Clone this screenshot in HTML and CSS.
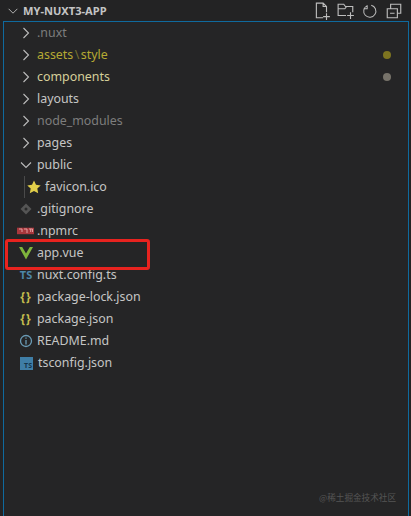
FILE: index.html
```html
<!DOCTYPE html>
<html lang="en">
<head>
<meta charset="utf-8">
<title>Explorer</title>
<link rel="stylesheet" href="styles.css">
</head>
<body>
<div class="panel">
  <header class="head">
    <div class="title">
      <svg class="chev" viewBox="0 0 16 16"><path d="M3 5.500l5 5 5-5"/></svg>
      <span>MY-NUXT3-APP</span>
    </div>
    <div class="actions">
      <svg viewBox="0 0 16 16"><path d="M9 14H3V1h6l3 3v5M9 1v3h3M12 10v6M9 13h6"/></svg>
      <svg viewBox="0 0 16 16"><path d="M8 12H1V2h5l1.500 2H14v5M1 6h6l1.500-2M12 9v6M9 12h6"/></svg>
      <svg viewBox="0 0 16 16"><path d="M5 2.500a6 6 0 1 0 4-.4M5 2v3.500H1.500" transform="translate(1 1) scale(.9)"/></svg>
      <svg viewBox="0 0 16 16"><path d="M2 6h9v8H2zM5 6V2h9v8h-3M4.500 10h4"/></svg>
    </div>
  </header>
  <div class="tree">
    <div class="row"><svg class="arrow" viewBox="0 0 16 16"><path d="M5.500 3l5 5-5 5"/></svg><span class="name dim">.nuxt</span></div>
    <div class="row"><svg class="arrow" viewBox="0 0 16 16"><path d="M5.500 3l5 5-5 5"/></svg><span class="name olive">assets<i class="sep">\</i>style</span><b class="dot dot-olive"></b></div>
    <div class="row"><svg class="arrow" viewBox="0 0 16 16"><path d="M5.500 3l5 5-5 5"/></svg><span class="name cream">components</span><b class="dot dot-grey"></b></div>
    <div class="row"><svg class="arrow" viewBox="0 0 16 16"><path d="M5.500 3l5 5-5 5"/></svg><span class="name">layouts</span></div>
    <div class="row"><svg class="arrow" viewBox="0 0 16 16"><path d="M5.500 3l5 5-5 5"/></svg><span class="name dim">node_modules</span></div>
    <div class="row"><svg class="arrow" viewBox="0 0 16 16"><path d="M5.500 3l5 5-5 5"/></svg><span class="name">pages</span></div>
    <div class="row"><svg class="arrow" viewBox="0 0 16 16"><path d="M3 5.500l5 5 5-5"/></svg><span class="name">public</span></div>
    <div class="row nested"><svg class="ficon" viewBox="0 0 16 16"><path class="star" d="M8 1.500l2 4.300 4.700.6-3.400 3.200.9 4.600L8 11.900l-4.200 2.300.9-4.600L1.300 6.400 6 5.800z"/></svg><span class="name">favicon.ico</span></div>
    <div class="row"><svg class="ficon" viewBox="0 0 16 16"><path class="git" d="M8 2.500L13.500 8 8 13.500 2.500 8z"/><circle class="gitdot" cx="8" cy="8" r="1.500"/></svg><span class="name">.gitignore</span></div>
    <div class="row"><svg class="ficon npm" viewBox="0 0 17 8"><rect class="npmbg" width="17" height="6.500" y=".7"/><path class="npmfg" d="M2 2h3v3M7 2h3v4M12 2h3.500v3M13.700 2v3"/></svg><span class="name">.npmrc</span></div>
    <div class="row"><svg class="ficon" viewBox="0 0 16 16"><path class="vue" d="M1 2h3.200L8 8.500 11.800 2H15L8 14.500z"/></svg><span class="name">app.vue</span></div>
    <div class="row"><span class="ficon ts">TS</span><span class="name">nuxt.config.ts</span></div>
    <div class="row"><span class="ficon json">{}</span><span class="name">package-lock.json</span></div>
    <div class="row"><span class="ficon json">{}</span><span class="name">package.json</span></div>
    <div class="row"><svg class="ficon" viewBox="0 0 16 16"><circle class="info" cx="8" cy="8" r="5.500"/><path class="info" d="M8 7v4.500M8 4.500v1.200"/></svg><span class="name">README.md</span></div>
    <div class="row"><span class="ficon tsbox">TS</span><span class="name">tsconfig.json</span></div>
  </div>
  <div class="highlight"></div>
  <div class="mark">@稀土掘金技术社区</div>
</div>
</body>
</html>
```
FILE: styles.css
```css
* { box-sizing: border-box; }
html, body { margin: 0; height: 100%; background: #252526; }
body { font-family: "Noto Sans", "Open Sans", sans-serif; overflow: hidden; }
.panel { position: relative; width: 411px; height: 516px; padding: 0 2px 0 3px; display: flex; flex-direction: column; background: #232324; }
.head { height: 21px; flex: none; display: flex; align-items: center; justify-content: space-between; padding: 0 5px 0 3px; }
.title { display: flex; align-items: center; gap: 3px; font-size: 11.100px; font-weight: 700; color: #c4c4c4; }
.chev { width: 14px; height: 14px; fill: none; stroke: #b5b5b5; stroke-width: 1.100; }
.actions { display: flex; gap: 6px; margin-right: 1px; }
.actions svg { width: 18px; height: 18px; fill: none; stroke: #bdbdbd; stroke-width: 1; }
.tree { flex: 1; padding-top: 1px; box-shadow: inset 1px 1px 0 #0f6a9e, inset -1px 0 0 #0f6a9e; background: #252526; }
.row { height: 22px; display: flex; align-items: center; position: relative; padding-left: 15px; }
.row.nested { padding-left: 23px; }
.nested::before { content: ""; position: absolute; left: 21px; top: 0; bottom: 0; width: 1px; background: #4a4a4a; }
.arrow { width: 16px; height: 16px; flex: none; fill: none; stroke: #bcbcbc; stroke-width: 1.100; margin-right: 3px; }
.ficon { width: 16px; height: 16px; flex: none; margin-right: 3px; display: block; }
.name { font-size: 12.400px; line-height: 22px; color: #c5c5c5; white-space: nowrap; }
.dim { color: #7d7d7d; }
.olive { color: #b5a933; }
.cream { color: #d6cf9a; }
.sep { font-style: normal; color: #75702f; padding: 0 1.500px; }
.dot { position: absolute; right: 18px; top: 7px; width: 8px; height: 8px; border-radius: 50%; }
.dot-olive { background: #7d7420; }
.dot-grey { background: #77736a; }
.star { fill: #e2cf4a; }
.git { fill: #555; }
.gitdot { fill: #2a2a2a; }
.npm { height: 8px; width: 17px; margin-left: -1px; margin-right: 3px; }
.npmbg { fill: #a8373c; }
.npmfg { fill: none; stroke: #e0a0a0; stroke-width: 1; }
.vue { fill: #7fb53c; }
.ts { font-size: 11px; font-weight: 700; line-height: 16px; color: #4d86a8; text-align: center; }
.json { font-size: 12px; font-weight: 700; line-height: 16px; color: #c4bd4e; text-align: center; white-space: nowrap; letter-spacing: 1px; }
.info { fill: none; stroke: #6a9bb5; stroke-width: 1.300; }
.tsbox { width: 13px; height: 13px; margin: 0 5px 0 2px; background: #3f7ea6; color: #16354a; font-size: 7px; font-weight: 700; line-height: 17px; text-align: right; padding-right: 1px; }
.highlight { position: absolute; left: 5px; top: 239px; width: 145px; height: 31px; border: 3px solid #e8231f; border-radius: 3px; }
.mark { position: absolute; right: 15px; top: 491px; font-family: "Noto Sans CJK SC", sans-serif; font-size: 8.600px; line-height: 12px; color: #555; }
```
